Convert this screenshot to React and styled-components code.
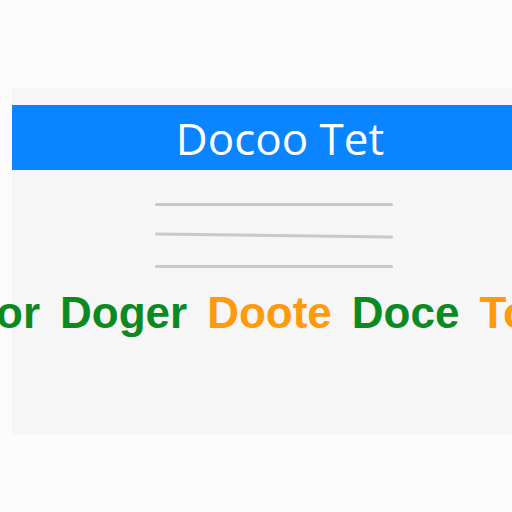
import React from 'react'
import styled, { createGlobalStyle } from 'styled-components'

const Global = createGlobalStyle`
  html, body {
    margin: 0;
    padding: 0;
    background: #fcfcfc;
    overflow: hidden;
  }
`

const Page = styled.div`
  width: 512px;
  height: 512px;
  padding: 88px 0 0 12px;
  box-sizing: border-box;
  overflow: hidden;
`

const Card = styled.div`
  width: 500px;
  height: 347px;
  background: #f6f6f6;
  padding-top: 17px;
  box-sizing: border-box;
  display: flex;
  flex-direction: column;
`

const Header = styled.div`
  height: 65px;
  background: #0a84ff;
  display: flex;
  align-items: center;
  justify-content: center;
  padding-left: 36px;
  color: #fff;
  font-family: "Open Sans", "Noto Sans", sans-serif;
  font-weight: 400;
  font-size: 44px;
  line-height: 1;
`

const Lines = styled.div`
  margin: 33px 0 0 143px;
  width: 238px;
  display: flex;
  flex-direction: column;
  gap: 28px;
`

const Line = styled.div`
  height: 3px;
  border-radius: 2px;
  background: #c9c9c9;
  transform: rotate(${p => p.$tilt || 0}deg);
`

const Words = styled.div`
  margin: 20px 0 0 -16px;
  display: flex;
  gap: 20px;
  white-space: nowrap;
  font-family: "Liberation Sans", Arial, sans-serif;
  font-weight: 700;
  font-size: 44px;
  line-height: 50px;
`

const Word = styled.span`
  color: ${p => (p.$tone === 'orange' ? '#ff9a0c' : '#0c8a22')};
`

const words = [
  ['or', 'green'],
  ['Doger', 'green'],
  ['Doote', 'orange'],
  ['Doce', 'green'],
  ['To', 'orange'],
]

const App = () => (
  <>
    <Global />
    <Page>
      <Card>
        <Header>Docoo Tet</Header>
        <Lines>
          <Line />
          <Line $tilt={0.7} />
          <Line />
        </Lines>
        <Words>
          {words.map(([w, tone]) => (
            <Word key={w} $tone={tone}>{w}</Word>
          ))}
        </Words>
      </Card>
    </Page>
  </>
)

export default App
